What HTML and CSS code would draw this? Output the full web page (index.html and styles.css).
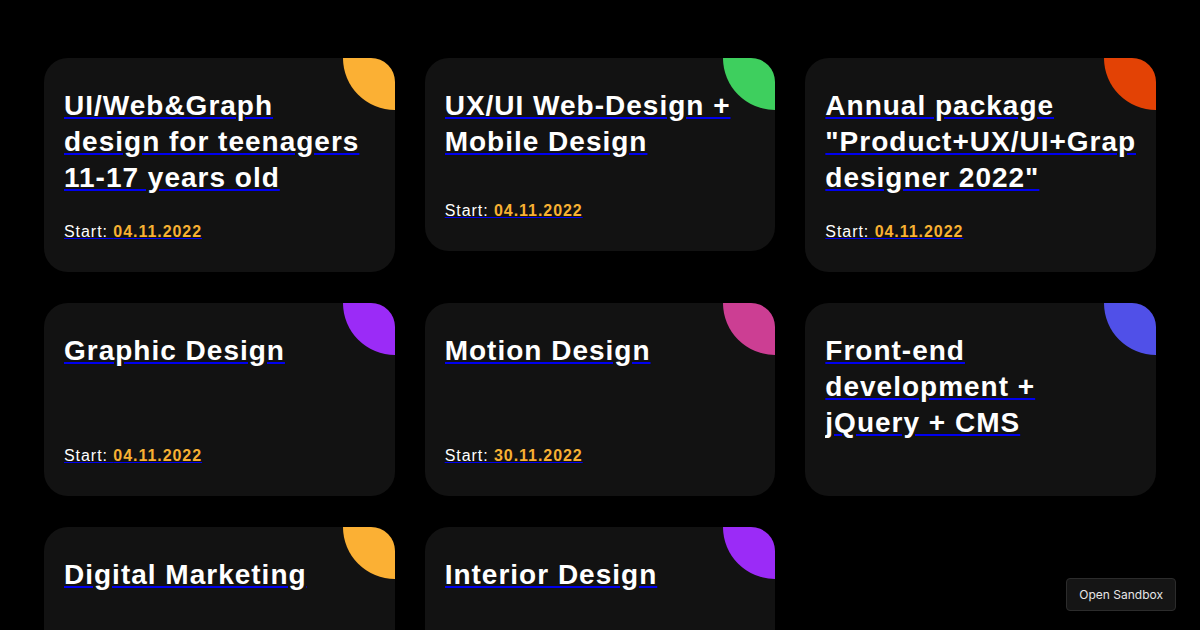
FILE: index.html
```html
<!DOCTYPE html>
<html lang="en">
<head>
<meta charset="utf-8">
<title>Courses</title>
<link rel="stylesheet" href="styles.css">
</head>
<body>
<main class="grid">
  <a class="card" href="#">
    <span class="corner c-orange"></span>
    <h2 class="title">UI/Web&amp;Graph design for teenagers 11-17 years old</h2>
    <p class="start">Start: <b class="date">04.11.2022</b></p>
  </a>
  <a class="card" href="#">
    <span class="corner c-green"></span>
    <h2 class="title">UX/UI Web-Design + Mobile Design</h2>
    <p class="start">Start: <b class="date">04.11.2022</b></p>
  </a>
  <a class="card" href="#">
    <span class="corner c-red"></span>
    <h2 class="title">Annual package "Product+UX/UI+Graphic designer 2022"</h2>
    <p class="start">Start: <b class="date">04.11.2022</b></p>
  </a>
  <a class="card" href="#">
    <span class="corner c-purple"></span>
    <h2 class="title">Graphic Design</h2>
    <p class="start">Start: <b class="date">04.11.2022</b></p>
  </a>
  <a class="card" href="#">
    <span class="corner c-pink"></span>
    <h2 class="title">Motion Design</h2>
    <p class="start">Start: <b class="date">30.11.2022</b></p>
  </a>
  <a class="card" href="#">
    <span class="corner c-indigo"></span>
    <h2 class="title">Front-end development + jQuery + CMS</h2>
  </a>
  <a class="card" href="#">
    <span class="corner c-orange"></span>
    <h2 class="title">Digital Marketing</h2>
  </a>
  <a class="card" href="#">
    <span class="corner c-purple"></span>
    <h2 class="title">Interior Design</h2>
  </a>
</main>
<button class="sandbox" type="button">Open Sandbox</button>
</body>
</html>
```

FILE: styles.css
```css
html, body {
  margin: 0;
  background: #000;
}

body {
  font-family: "Liberation Sans", Arial, sans-serif;
}

.grid {
  display: grid;
  grid-template-columns: repeat(3, 1fr);
  gap: 31px 30px;
  align-items: start;
  padding: 58px 44px;
}

.card {
  position: relative;
  overflow: hidden;
  display: flex;
  flex-direction: column;
  justify-content: space-between;
  gap: 27px;
  box-sizing: border-box;
  min-height: 193px;
  padding: 30px 20px 31px;
  border-radius: 24px;
  background: #121212;
  color: #0000ee;
  text-decoration: none;
}

.corner {
  position: absolute;
  top: -52px;
  right: -52px;
  width: 104px;
  height: 104px;
  border-radius: 50%;
}

.c-orange { background: #fbb034; }
.c-green { background: #3ecf5e; }
.c-red { background: #e34205; }
.c-purple { background: #9b2bf7; }
.c-pink { background: #cc3e93; }
.c-indigo { background: #5050e8; }

.title {
  position: relative;
  margin: 0;
  overflow: hidden;
  font-size: 28px;
  line-height: 36px;
  font-weight: 700;
  letter-spacing: 1px;
  color: #fff;
  text-decoration: underline;
  text-decoration-color: #0000ee;
}

.start {
  margin: 0;
  font-size: 16px;
  line-height: 18px;
  letter-spacing: 0.95px;
  color: #fff;
  text-decoration: underline;
  text-decoration-color: #0000ee;
}

.date {
  color: #f8b133;
  font-weight: 700;
}

.sandbox {
  position: fixed;
  right: 24px;
  bottom: 19px;
  height: 33px;
  padding: 0 12px;
  border: 1px solid #2c2c2c;
  border-radius: 4px;
  background: #151515;
  color: #e6e6e6;
  font-family: Inter, "Liberation Sans", sans-serif;
  font-size: 12px;
}
```
